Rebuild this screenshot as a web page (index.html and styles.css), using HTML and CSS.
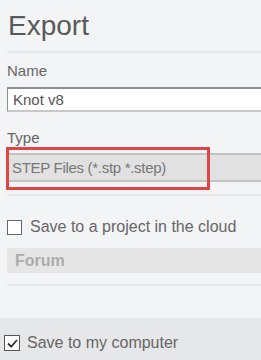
FILE: index.html
```html
<!DOCTYPE html>
<html lang="en">
<head>
  <meta charset="UTF-8" />
  <title>Export</title>
  <link rel="stylesheet" href="styles.css">
</head>
<body>
  <div class="dialog">
    <div class="content">
      <h1 class="title">Export</h1>

      <label class="field-label">Name</label>
      <div class="text-input">Knot v8</div>

      <label class="field-label type-label">Type</label>
      <div class="select-wrap">
        <div class="select-box">STEP Files (*.stp *.step)</div>
        <div class="highlight"></div>
      </div>

      <div class="cloud">
        <div class="check-row">
          <span class="check-box"></span>
          <span class="check-text">Save to a project in the cloud</span>
        </div>
        <div class="project-box">Forum</div>
      </div>
    </div>

    <div class="footer">
      <div class="check-row">
        <span class="check-box checked">
          <svg width="13" height="13" viewBox="0 0 13 13"><path d="M2 6.5 L5.2 9.7 L11 3" fill="none" stroke="#333" stroke-width="1.8"/></svg>
        </span>
        <span class="check-text">Save to my computer</span>
      </div>
    </div>
  </div>
</body>
</html>
```

FILE: styles.css
```css
body {
  margin: 0;
  background: #f3f4f6;
  font-family: "Liberation Sans", Arial, sans-serif;
  color: #666;
  overflow: hidden;
}
.dialog {
  width: 261px;
  height: 360px;
  overflow: hidden;
}
.content {
  padding-left: 7px;
}
.title {
  margin: 0;
  padding: 10px 0 9px 1px;
  font-size: 28px;
  line-height: 32px;
  font-weight: normal;
  color: #595959;
  border-bottom: 2px solid #e6e7ea;
}
.field-label {
  display: block;
  margin-top: 9px;
  font-size: 15px;
  line-height: 17px;
  color: #666;
}
.text-input {
  margin-top: 8px;
  width: 270px;
  height: 21px;
  background: #fff;
  border-top: 2px solid #909090;
  border-left: 1px solid #909090;
  border-bottom: 2px solid #c8c8c8;
  padding-left: 5px;
  font-size: 15px;
  line-height: 21px;
  color: #555;
}
.type-label {
  margin-top: 17px;
}
.select-wrap {
  position: relative;
  margin-top: 7px;
  padding-bottom: 12px;
  border-bottom: 2px solid #e6e7ea;
}
.select-box {
  margin-left: 2px;
  width: 270px;
  height: 25px;
  background: #e1e1e1;
  border-top: 2px solid #c2c2c2;
  border-bottom: 2px solid #c2c2c2;
  padding-left: 3px;
  font-size: 15px;
  letter-spacing: -0.3px;
  line-height: 25px;
  color: #777;
}
.highlight {
  position: absolute;
  left: -1px;
  top: -6px;
  width: 198px;
  height: 37px;
  border: 3px solid #e24444;
}
.cloud {
  padding-top: 22px;
  padding-bottom: 11px;
  border-bottom: 2px solid #e6e7ea;
}
.check-row {
  display: flex;
  align-items: center;
  gap: 8px;
}
.check-box {
  width: 13px;
  height: 13px;
  background: #fff;
  border: 1.5px solid #666;
  display: flex;
  align-items: center;
  justify-content: center;
}
.check-text {
  font-size: 16px;
  line-height: 18px;
  color: #666;
}
.project-box {
  margin-top: 12px;
  height: 25px;
  background: #e6e6e6;
  padding-left: 8px;
  font-size: 16px;
  line-height: 25px;
  font-weight: bold;
  color: #acacac;
}
.footer {
  margin-top: 32px;
  height: 60px;
  background: #e6e7e9;
  padding: 16px 0 0 4px;
}
.footer .check-row {
  gap: 7px;
}
.check-box.checked {
  width: 14px;
  height: 14px;
  border-color: #555;
}
```
